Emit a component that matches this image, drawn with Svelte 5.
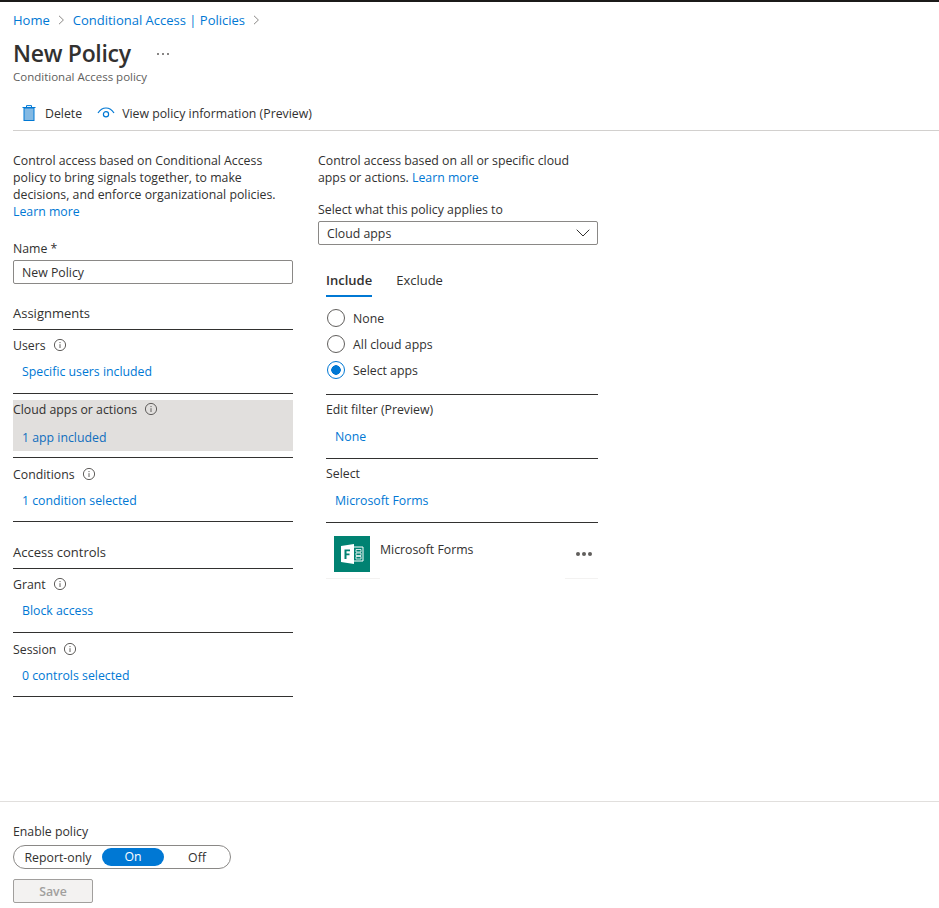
<script>
  const sections = [
    { heading: 'Assignments', items: [
      { label: 'Users', value: 'Specific users included' },
      { label: 'Cloud apps or actions', value: '1 app included', active: true },
      { label: 'Conditions', value: '1 condition selected', lower: true }
    ]},
    { heading: 'Access controls', items: [
      { label: 'Grant', value: 'Block access' },
      { label: 'Session', value: '0 controls selected', lower: true }
    ]}
  ];
  const radios = [
    { label: 'None' },
    { label: 'All cloud apps' },
    { label: 'Select apps', on: true }
  ];
</script>

{#snippet info()}
  <svg class="info" width="14" height="14" viewBox="0 0 14 14">
    <circle cx="7" cy="7" r="5.6" fill="none" stroke="#605e5c" />
    <path d="M7 6.2V10M7 4v1.1" stroke="#605e5c" fill="none" />
  </svg>
{/snippet}

<div class="page">
  <nav class="crumbs">
    <a>Home</a>
    <svg width="7" height="10" viewBox="0 0 7 10"><path d="M1 .8 5.4 5 1 9.2" fill="none" stroke="#8a8886" /></svg>
    <a>Conditional Access | Policies</a>
    <svg width="7" height="10" viewBox="0 0 7 10"><path d="M1 .8 5.4 5 1 9.2" fill="none" stroke="#8a8886" /></svg>
  </nav>

  <header class="title">
    <div class="title-row">
      <h1>New Policy</h1>
      <span class="more"><i></i><i></i><i></i></span>
    </div>
    <div class="subtitle">Conditional Access policy</div>
  </header>

  <div class="toolbar">
    <button class="tool delete">
      <svg width="14" height="16" viewBox="0 0 14 16">
        <path d="M4.5 2V.6h5V2" fill="none" stroke="#0078d4" />
        <path d="M.5 2.500h13" stroke="#0078d4" />
        <rect x="2" y="3" width="10" height="12.500" fill="#83b9e3" stroke="#0078d4" />
      </svg>
      Delete
    </button>
    <button class="tool view">
      <svg width="18" height="12" viewBox="0 0 18 12">
        <path d="M1 6C3 2.800 5.800 1 9 1s6 1.800 8 5" fill="none" stroke="#0078d4" stroke-width="1.200" />
        <circle cx="9" cy="7.200" r="2.600" fill="none" stroke="#0078d4" stroke-width="1.200" />
      </svg>
      View policy information (Preview)
    </button>
  </div>

  <main class="columns">
    <section class="left">
      <p class="intro">Control access based on Conditional Access policy to bring signals together, to make decisions, and enforce organizational policies. <a>Learn more</a></p>
      <label class="name-label" for="policy-name">Name <span>*</span></label>
      <input id="policy-name" class="name-input" value="New Policy" />

      {#each sections as s}
        <h2>{s.heading}</h2>
        {#each s.items as item}
          <div class="item" class:active={item.active} class:lower={item.lower}>
            <div class="item-inner">
              <div class="item-label">{item.label} {@render info()}</div>
              <a class="item-value">{item.value}</a>
            </div>
          </div>
        {/each}
      {/each}
    </section>

    <section class="right">
      <p class="intro">Control access based on all or specific cloud apps or actions. <a>Learn more</a></p>
      <div class="select-label">Select what this policy applies to</div>
      <div class="select">
        <span>Cloud apps</span>
        <svg width="14" height="8" viewBox="0 0 14 8"><path d="M.7.7 7 7l6.300-6.300" fill="none" stroke="#323130" /></svg>
      </div>

      <div class="panel">
        <div class="tabs">
          <span class="tab selected">Include</span>
          <span class="tab">Exclude</span>
        </div>
        <div class="radios">
          {#each radios as r}
            <div class="radio" class:on={r.on}><i></i>{r.label}</div>
          {/each}
        </div>
        <div class="block">
          <div>Edit filter (Preview)</div>
          <a>None</a>
        </div>
        <div class="block">
          <div>Select</div>
          <a>Microsoft Forms</a>
        </div>
        <div class="app">
          <div class="app-icon">
            <svg width="26" height="24" viewBox="0 0 26 24">
              <path d="M14 5h10v14H14" fill="none" stroke="#fff" />
              <path d="M17 7.500h5v2.500h-5zM17 11h5v2.500h-5zM17 14.500h5V17h-5z" fill="none" stroke="#fff" stroke-width=".8" />
              <path d="M2 4 15 2v20L2 20z" fill="#fff" />
              <path d="M5.500 7.500h5.500v1.700H7.500v2.300h3v1.700h-3V17h-2z" fill="#008272" />
            </svg>
          </div>
          <span class="app-name">Microsoft Forms</span>
          <span class="dots"><i></i><i></i><i></i></span>
        </div>
      </div>
    </section>
  </main>

  <footer class="footer">
    <div class="enable">Enable policy</div>
    <div class="toggle">
      <span class="opt report">Report-only</span>
      <span class="opt on">On</span>
      <span class="opt off">Off</span>
    </div>
    <button class="save" disabled>Save</button>
  </footer>
</div>

<style>
  :global(body) {
    margin: 0;
    background: #fff;
  }
  .page {
    width: 939px;
    height: 908px;
    box-sizing: border-box;
    border-top: 2px solid #1b1a19;
    display: flex;
    flex-direction: column;
    font-family: "Open Sans", "Noto Sans", sans-serif;
    font-size: 12.3px;
    color: #323130;
    overflow: hidden;
  }
  a {
    color: #0078d4;
    text-decoration: none;
  }
  .crumbs {
    display: flex;
    align-items: center;
    gap: 8px;
    height: 18px;
    margin: 9px 0 0 13px;
    font-size: 13px;
  }
  .title {
    margin: 7px 0 0 13px;
  }
  .title-row {
    display: flex;
    align-items: center;
    height: 34px;
  }
  h1 {
    margin: 0;
    font-size: 23px;
    font-weight: 600;
    color: #323130;
    letter-spacing: -0.3px;
  }
  .more {
    display: flex;
    gap: 3px;
    margin-left: 26px;
    margin-top: 1px;
  }
  .more i {
    width: 2px;
    height: 2px;
    border-radius: 50%;
    background: #605e5c;
  }
  .subtitle {
    font-size: 11.5px;
    height: 18px;
    margin-top: -1px;
    line-height: 16px;
    color: #605e5c;
  }
  .toolbar {
    display: flex;
    gap: 15px;
    align-items: center;
    height: 34px;
    margin: 9px 0 0 13px;
    padding: 0 0 0 9px;
    border-bottom: 1px solid #d2d0ce;
    box-sizing: content-box;
  }
  .tool {
    display: flex;
    align-items: center;
    border: 0;
    background: none;
    padding: 0;
    font: inherit;
    color: #323130;
  }
  .delete { gap: 9px; }
  .view { gap: 7px; }
  .columns {
    display: flex;
    flex: 1;
    min-height: 0;
    padding: 21px 0 0 13px;
  }
  .left {
    width: 280px;
  }
  .right {
    width: 280px;
    margin-left: 25px;
  }
  .intro {
    margin: 0;
    line-height: 17px;
  }
  .left .intro { width: 268px; }
  .right .intro { width: 262px; }
  .name-label {
    display: block;
    margin-top: 20px;
    height: 18px;
    line-height: 18px;
  }
  .name-label span { color: #323130; }
  .name-input {
    display: block;
    width: 280px;
    height: 24px;
    box-sizing: border-box;
    margin-top: 2px;
    padding: 0 8px;
    border: 1px solid #8a8886;
    border-radius: 2px;
    font: inherit;
    color: #323130;
    outline: 0;
  }
  h2 {
    margin: 0;
    font-weight: 400;
    font-size: 13px;
    height: 30px;
    line-height: 29px;
    border-bottom: 1px solid #323130;
    box-sizing: content-box;
  }
  .name-input + h2 { margin-top: 15px; }
  .item + h2 { margin-top: 16px; }
  .item {
    height: 63px;
    border-bottom: 1px solid #323130;
    box-sizing: content-box;
  }
  .item-inner {
    height: 57px;
    padding-top: 6px;
    box-sizing: border-box;
  }
  .item.lower .item-inner { padding-top: 7px; }
  .item.active .item-inner {
    background: #e1dfdd;
    height: 51px;
    padding-top: 0;
  }
  .item.active {
    padding-top: 6px;
    height: 57px;
  }
  .item.active .item-value {
    margin-top: 11px;
    color: #106ebe;
  }
  .item-label {
    display: flex;
    align-items: center;
    gap: 4px;
    height: 18px;
  }
  .info { margin-left: 3px; }
  .item-value {
    display: block;
    margin: 9px 0 0 9px;
    height: 18px;
    line-height: 18px;
  }
  .select-label {
    margin-top: 15px;
    height: 18px;
    line-height: 18px;
  }
  .select {
    display: flex;
    justify-content: space-between;
    align-items: center;
    height: 24px;
    margin-top: 2px;
    box-sizing: border-box;
    padding: 0 7px 0 8px;
    border: 1px solid #8a8886;
    border-radius: 2px;
  }
  .panel {
    margin-left: 8px;
  }
  .tabs {
    display: flex;
    gap: 24px;
    margin-top: 23px;
  }
  .tab {
    height: 29px;
    line-height: 25px;
    font-size: 13px;
    box-sizing: border-box;
  }
  .tab.selected {
    font-weight: 600;
    border-bottom: 2px solid #0078d4;
  }
  .radios {
    display: flex;
    flex-direction: column;
    gap: 8px;
    margin-top: 12px;
    padding-bottom: 15px;
    border-bottom: 1px solid #323130;
  }
  .radio {
    display: flex;
    align-items: center;
    gap: 8px;
    height: 18px;
  }
  .radio i {
    width: 18px;
    height: 18px;
    margin-left: 1px;
    box-sizing: border-box;
    border: 1px solid #605e5c;
    border-radius: 50%;
    background: #fff;
  }
  .radio.on i {
    border-color: #0078d4;
    background: radial-gradient(circle, #0078d4 0 4.500px, #fff 5px);
  }
  .block {
    height: 63px;
    box-sizing: content-box;
    border-bottom: 1px solid #323130;
  }
  .block div {
    height: 18px;
    line-height: 18px;
    padding-top: 6px;
  }
  .block a {
    display: block;
    margin: 9px 0 0 9px;
    height: 18px;
    line-height: 18px;
  }
  .app {
    position: relative;
    display: flex;
    align-items: flex-start;
    height: 56px;
    padding: 13px 0 0 8px;
    box-sizing: border-box;
  }
  .app::before,
  .app::after {
    content: "";
    position: absolute;
    bottom: 0;
    height: 1px;
    background: #f3f2f1;
  }
  .app::before { left: 0; width: 54px; }
  .app::after { right: 0; width: 33px; }
  .app-icon {
    width: 36px;
    height: 36px;
    background: #008272;
    display: flex;
    align-items: center;
    justify-content: center;
  }
  .app-name {
    margin-left: 10px;
    line-height: 28px;
  }
  .dots {
    position: absolute;
    right: 6px;
    top: 29px;
    display: flex;
    gap: 2px;
  }
  .dots i {
    width: 4px;
    height: 4px;
    border-radius: 50%;
    background: #605e5c;
  }
  .footer {
    height: 107px;
    box-sizing: border-box;
    border-top: 1px solid #e1dfdd;
    padding: 21px 0 0 13px;
  }
  .enable {
    height: 18px;
    line-height: 18px;
  }
  .toggle {
    position: relative;
    display: flex;
    align-items: center;
    width: 218px;
    height: 24px;
    margin-top: 4px;
    box-sizing: border-box;
    border: 1px solid #8a8886;
    border-radius: 12px;
  }
  .opt {
    text-align: center;
  }
  .report { width: 88px; box-sizing: border-box; }
  .opt.on {
    width: 62px;
    height: 18px;
    line-height: 18px;
    border-radius: 9px;
    background: #0078d4;
    color: #fff;
  }
  .off { width: 66px; }
  .save {
    display: block;
    width: 80px;
    height: 24px;
    margin-top: 10px;
    border: 1px solid #a19f9d;
    border-radius: 2px;
    background: #f3f2f1;
    color: #a19f9d;
    font: inherit;
    font-weight: 600;
    padding: 0;
  }
</style>
